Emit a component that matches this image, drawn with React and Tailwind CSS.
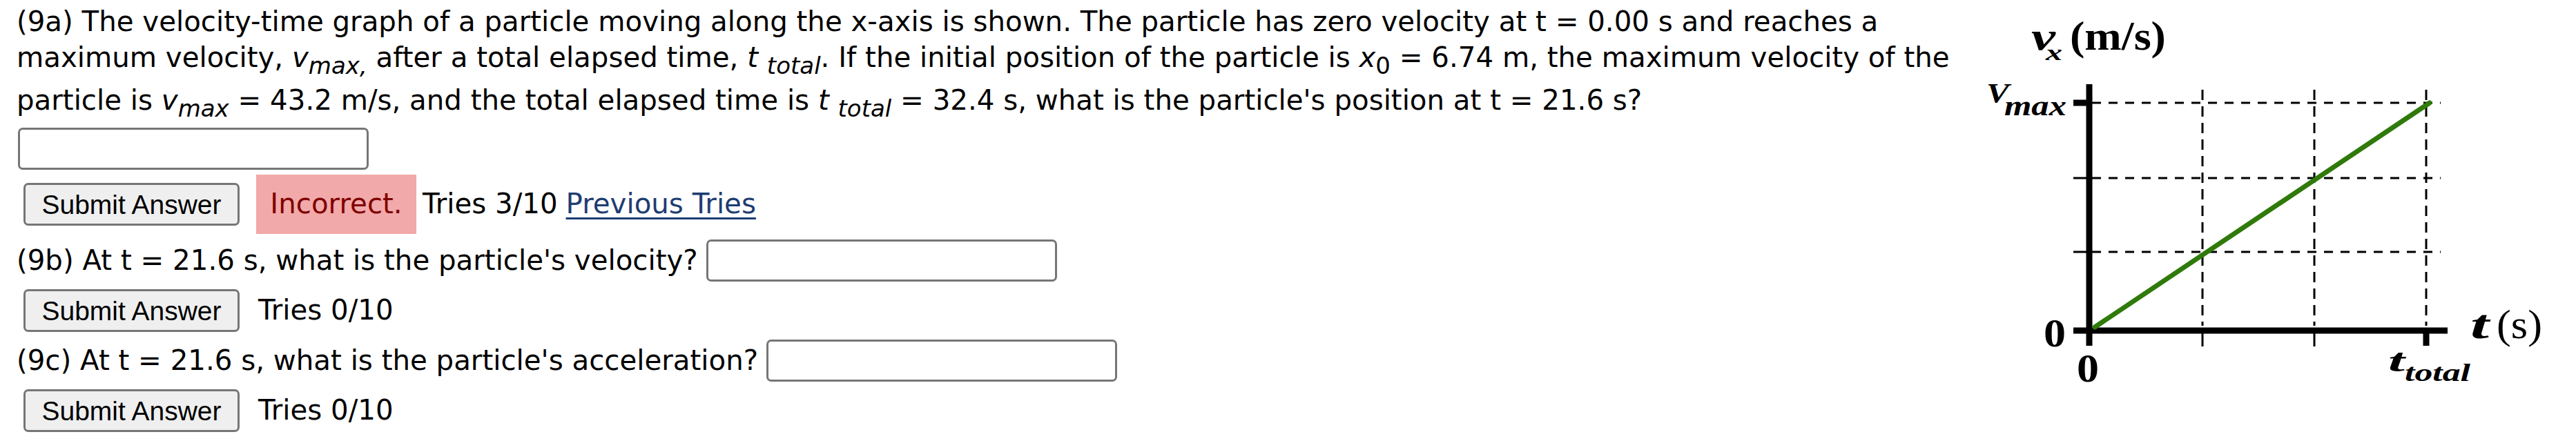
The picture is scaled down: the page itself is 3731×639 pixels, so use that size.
import React from 'react'

const body = "font-['DejaVu_Sans',Verdana,sans-serif]"

function Sub({ children, plain }) {
  return (
    <span className={`relative top-[10px] text-[34px] ${plain ? '' : 'italic'}`}>{children}</span>
  )
}

function SubmitButton() {
  return (
    <button className="h-[62px] w-[313px] shrink-0 rounded-[7px] border-[3px] border-[#767676] bg-[#efefef] font-['Liberation_Sans',Arial,sans-serif] text-[39px] leading-none text-black">
      Submit Answer
    </button>
  )
}

function AnswerBox() {
  return (
    <input
      type="text"
      className="h-[61px] w-[508px] shrink-0 rounded-[7px] border-[3px] border-[#767676] bg-white"
    />
  )
}

function Graph() {
  const dash = '13 11'
  return (
    <svg width="891" height="639" viewBox="0 0 891 639" className="shrink-0">
      {/* grid */}
      {[149, 258, 365].map((y) => (
        <line key={y} x1="190" y1={y} x2="695" y2={y} stroke="#000" strokeWidth="3" strokeDasharray={dash} />
      ))}
      {[350, 512, 674].map((x) => (
        <line key={x} x1={x} y1="130" x2={x} y2="472" stroke="#000" strokeWidth="3" strokeDasharray="15 9" />
      ))}
      {/* axes */}
      <line x1="186" y1="122" x2="186" y2="501" stroke="#000" strokeWidth="9" />
      <line x1="163" y1="479" x2="705" y2="479" stroke="#000" strokeWidth="9" />
      <line x1="163" y1="149" x2="186" y2="149" stroke="#000" strokeWidth="9" />
      <line x1="163" y1="258" x2="186" y2="258" stroke="#000" strokeWidth="3" />
      <line x1="163" y1="365" x2="186" y2="365" stroke="#000" strokeWidth="3" />
      <line x1="350" y1="479" x2="350" y2="502" stroke="#000" strokeWidth="3" />
      <line x1="512" y1="479" x2="512" y2="502" stroke="#000" strokeWidth="3" />
      <line x1="674" y1="479" x2="674" y2="501" stroke="#000" strokeWidth="9" />
      {/* data */}
      <line x1="194" y1="474" x2="679" y2="149" stroke="#2f7a0a" strokeWidth="7" strokeLinecap="round" />
      {/* labels */}
      <g fontFamily="'Liberation Serif', 'Times New Roman', serif" fontWeight="bold" fill="#000">
        <text x="102" y="72" fontSize="58" fontStyle="italic" textLength="35" lengthAdjust="spacingAndGlyphs">v</text>
        <text x="123" y="87" fontSize="32" fontStyle="italic" textLength="24" lengthAdjust="spacingAndGlyphs">x</text>
        <text x="158" y="72" fontSize="60" textLength="139" lengthAdjust="spacingAndGlyphs">(m/s)</text>
        <text x="37" y="148" fontSize="40" fontStyle="italic" textLength="33" lengthAdjust="spacingAndGlyphs">V</text>
        <text x="63" y="167" fontSize="40" fontStyle="italic" textLength="90" lengthAdjust="spacingAndGlyphs">max</text>
        <text x="120" y="502" fontSize="57" textLength="32" lengthAdjust="spacingAndGlyphs">0</text>
        <text x="168" y="553" fontSize="57" textLength="32" lengthAdjust="spacingAndGlyphs">0</text>
        <text x="738" y="490" fontSize="60" fontStyle="italic" textLength="27" lengthAdjust="spacingAndGlyphs">t</text>
        <text x="776" y="490" fontSize="60" fontWeight="normal" textLength="66" lengthAdjust="spacingAndGlyphs">(s)</text>
        <text x="619" y="538" fontSize="46" fontStyle="italic" textLength="24" lengthAdjust="spacingAndGlyphs">t</text>
        <text x="643" y="552" fontSize="36" fontStyle="italic" textLength="95" lengthAdjust="spacingAndGlyphs">total</text>
      </g>
    </svg>
  )
}

export default function App() {
  return (
    <div className={`flex h-[639px] w-[3731px] overflow-hidden bg-white text-black ${body}`}>
      <div className="flex w-[2840px] shrink-0 flex-col pl-[24px] pt-[10px] text-[40.3px]">
        {/* (9a) */}
        <div className="h-[44px] whitespace-nowrap leading-[44px]">
          (9a) The velocity-time graph of a particle moving along the x-axis is shown. The particle has zero velocity at t = 0.00 s and reaches a
        </div>
        <div className="mt-[8px] h-[44px] whitespace-nowrap leading-[44px]">
          maximum velocity, <i>v</i><Sub>max,</Sub> after a total elapsed time, <i>t</i> <Sub>total</Sub>. If the initial position of the particle is <i>x</i><Sub plain>0</Sub> = 6.74 m, the maximum velocity of the
        </div>
        <div className="mt-[18px] h-[44px] whitespace-nowrap leading-[44px]">
          particle is <i>v</i><Sub>max</Sub> = 43.2 m/s, and the total elapsed time is <i>t</i> <Sub>total</Sub> = 32.4 s, what is the particle's position at t = 21.6 s?
        </div>
        <div className="ml-[2px] mt-[17px] flex">
          <AnswerBox />
        </div>
        <div className="mt-[7px] flex h-[86px] items-center whitespace-nowrap">
          <div className="ml-[10px]">
            <SubmitButton />
          </div>
          <div className="ml-[24px] flex h-[86px] w-[232px] items-center justify-center bg-[#f2a9a9] text-[#7f0000]">
            Incorrect.
          </div>
          <span className="ml-[9px]">Tries 3/10</span>
          <a href="#" className="ml-[12px] text-[#1e3d72] underline decoration-[3px] underline-offset-[6px]">
            Previous Tries
          </a>
        </div>
        {/* (9b) */}
        <div className="mt-[8px] flex h-[61px] items-center whitespace-nowrap leading-[44px]">
          <span>(9b) At t = 21.6 s, what is the particle's velocity?</span>
          <span className="ml-[12px] flex">
            <AnswerBox />
          </span>
        </div>
        <div className="mt-[11px] flex h-[62px] items-center whitespace-nowrap">
          <div className="ml-[10px]">
            <SubmitButton />
          </div>
          <span className="ml-[27px]">Tries 0/10</span>
        </div>
        {/* (9c) */}
        <div className="mt-[11px] flex h-[61px] items-center whitespace-nowrap leading-[44px]">
          <span>(9c) At t = 21.6 s, what is the particle's acceleration?</span>
          <span className="ml-[12px] flex">
            <AnswerBox />
          </span>
        </div>
        <div className="mt-[11px] flex h-[62px] items-center whitespace-nowrap">
          <div className="ml-[10px]">
            <SubmitButton />
          </div>
          <span className="ml-[27px]">Tries 0/10</span>
        </div>
      </div>
      <Graph />
    </div>
  )
}
